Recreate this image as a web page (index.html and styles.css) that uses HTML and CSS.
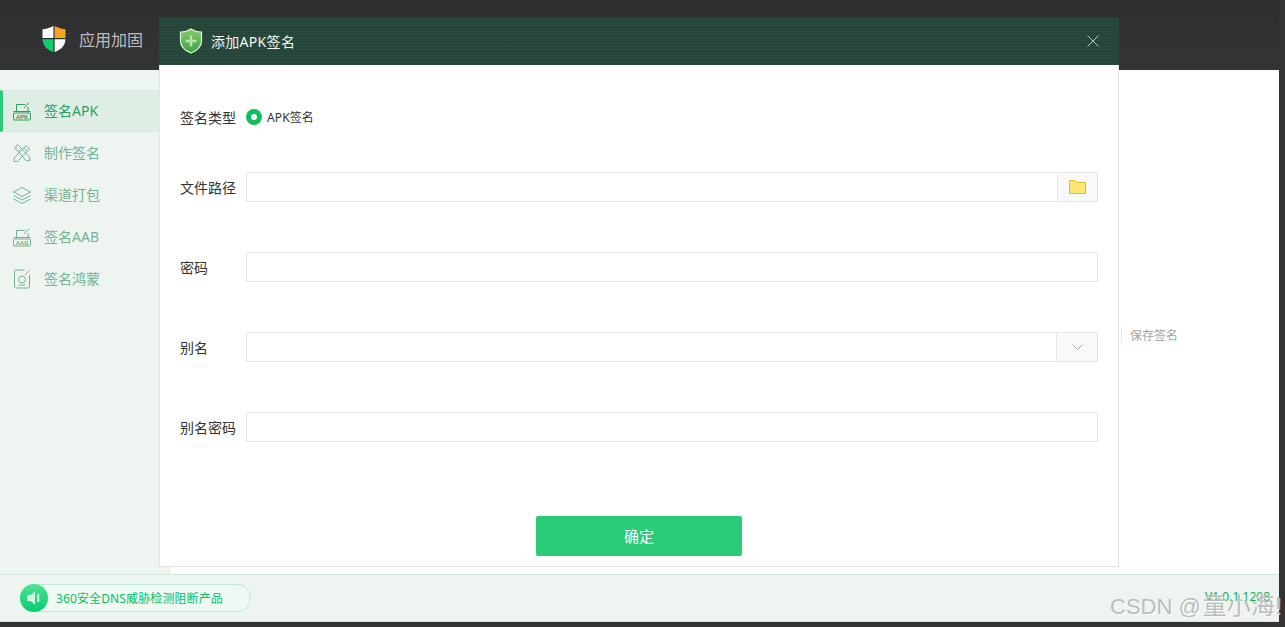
FILE: index.html
```html
<!DOCTYPE html>
<html lang="zh-CN">
<head>
<meta charset="utf-8">
<title>应用加固</title>
<link rel="stylesheet" href="styles.css">
</head>
<body>
<div class="app">
  <header class="topbar">
    <svg class="logo" width="24" height="28" viewBox="0 0 24 28">
      <path d="M11.400 1 C8 3 4 4 .5 4.200 V13 H11.400Z" fill="#fff"/>
      <path d="M12.600 1 C16 3 20 4 23.500 4.200 V13 H12.600Z" fill="#f9a51f"/>
      <path d="M.5 14.200 H11.400 V27 C6 25 .9 21.500 .5 14.200Z" fill="#0fcf6d"/>
      <path d="M23.500 14.200 H12.600 V27 C18 25 23.100 21.500 23.500 14.200Z" fill="#fff"/>
    </svg>
    <span class="app-title">应用加固</span>
  </header>
  <div class="middle">
    <nav class="sidebar">
      <a class="nav-item active">
        <svg class="nav-icon" width="18" height="20" viewBox="0 0 18 20" fill="none" stroke="currentColor"><path d="M3.500 10V3.500H12M16 1.500 11 7M15 6V10"/><rect x=".5" y="12" width="17" height="7" rx="1"/><path d="M.5 10.500H17.500"/><text x="9" y="18" class="icon-label">APK</text></svg>
        <span>签名APK</span>
      </a>
      <a class="nav-item">
        <svg class="nav-icon" width="18" height="20" viewBox="0 0 18 20" fill="none" stroke="currentColor"><path d="M1 15 13 2.500l3.500 3.500L4.500 18.500H1Z"/><path d="M1.500 4.500 4.500 1.500 16.500 14 17 18 13 17.500Z"/><path d="M11 5l3 3M4 4l-1.500 1.500M7 7 5.500 8.500"/></svg>
        <span>制作签名</span>
      </a>
      <a class="nav-item">
        <svg class="nav-icon" width="18" height="20" viewBox="0 0 18 20" fill="none" stroke="currentColor"><path d="M9 2.500 17.500 7 9 11.500 .5 7Z"/><path d="M.5 10.500 9 15 17.500 10.500"/><path d="M.5 14 9 18.500 17.500 14"/></svg>
        <span>渠道打包</span>
      </a>
      <a class="nav-item">
        <svg class="nav-icon" width="18" height="20" viewBox="0 0 18 20" fill="none" stroke="currentColor"><path d="M3.500 10V3.500H12M16 1.500 11 7M15 6V10"/><rect x=".5" y="12" width="17" height="7" rx="1"/><path d="M.5 10.500H17.500"/><text x="9" y="18" class="icon-label">AAB</text></svg>
        <span>签名AAB</span>
      </a>
      <a class="nav-item">
        <svg class="nav-icon" width="18" height="20" viewBox="0 0 18 20" fill="none" stroke="currentColor"><path d="M11.500 1H3Q1.500 1 1.500 2.500V17.500Q1.500 19 3 19H15Q16.500 19 16.500 17.500V6"/><path d="M16.500 1.500 12 6"/><circle cx="9" cy="10.500" r="3.500"/><path d="M5.500 16H12.500"/></svg>
        <span>签名鸿蒙</span>
      </a>
    </nav>
    <main class="content">
      <div class="save-row">
        <span class="ghost-btn"></span>
        <span class="save-text">保存签名</span>
      </div>
    </main>
  </div>
  <footer class="statusbar">
    <div class="notice">
      <span class="notice-icon">
        <svg width="16" height="16" viewBox="0 0 16 16"><path d="M1 5H4.500L9 1.500V14.500L4.500 11H1Z" fill="#d5f5e3"/><rect x="11" y="4" width="2.200" height="8" fill="#d5f5e3"/></svg>
      </span>
      <span class="notice-text">360安全DNS威胁检测阻断产品</span>
    </div>
    <span class="version">V1.0.1.1208</span>
  </footer>
</div>

<section class="dialog">
  <header class="dialog-head">
    <svg width="24" height="26" viewBox="0 0 24 26">
      <defs><linearGradient id="sg" x1="0" y1="0" x2="0" y2="1"><stop offset="0" stop-color="#86cc6c"/><stop offset="1" stop-color="#3fa14a"/></linearGradient></defs>
      <path d="M12 1C9 3 5 4 1.500 4.200V13C1.500 19 7 23 12 25C17 23 22.500 19 22.500 13V4.200C19 4 15 3 12 1Z" fill="url(#sg)" stroke="#e3f1dd" stroke-width="1.200"/>
      <path d="M10.800 7.500H13.200V11.800H17.500V14.200H13.200V18.500H10.800V14.200H6.500V11.800H10.800Z" fill="#b9e6a6"/>
    </svg>
    <h2 class="dialog-title">添加APK签名</h2>
    <svg class="close" width="12" height="12" viewBox="0 0 12 12" fill="none" stroke="#b9c2bd"><path d="M.5 .5 11.500 11.500M11.500 .5 .5 11.500"/></svg>
  </header>
  <form class="dialog-body">
    <div class="radio-row">
      <label class="field-label">签名类型</label>
      <span class="radio"></span>
      <span class="radio-text">APK签名</span>
    </div>
    <div class="field-row">
      <label class="field-label">文件路径</label>
      <div class="control">
        <span class="control-fill"></span>
        <span class="addon addon-folder">
          <svg width="17" height="14" viewBox="0 0 17 14"><path d="M.5 13.500V.5H6L7.500 2.500H16.500V13.500Z" fill="#ffe574" stroke="#e5b92e"/></svg>
        </span>
      </div>
    </div>
    <div class="field-row">
      <label class="field-label">密码</label>
      <div class="control"><span class="control-fill"></span></div>
    </div>
    <div class="field-row">
      <label class="field-label">别名</label>
      <div class="control">
        <span class="control-fill"></span>
        <span class="addon addon-select">
          <svg width="11" height="6" viewBox="0 0 11 6" fill="none" stroke="#a9a9a9"><path d="M.5 .5 5.500 5.500 10.500 .5"/></svg>
        </span>
      </div>
    </div>
    <div class="field-row">
      <label class="field-label">别名密码</label>
      <div class="control"><span class="control-fill"></span></div>
    </div>
    <div class="actions"><button type="button" class="confirm">确定</button></div>
  </form>
</section>
<div class="watermark">CSDN @<span class="watermark-name">童小海!</span></div>
</body>
</html>
```
FILE: styles.css
```css
* { box-sizing: border-box; }
html, body { margin: 0; height: 100%; overflow: hidden; }
body {
  background: #333335;
  font-family: "Noto Sans", "Noto Sans CJK SC", sans-serif;
  font-size: 13px;
  color: #333;
}
.app {
  width: 1279px;
  height: 622px;
  display: flex;
  flex-direction: column;
  background: #fff;
}
.topbar {
  height: 70px;
  display: flex;
  align-items: center;
  padding: 8px 0 0 42px;
  background:
    repeating-linear-gradient(0deg, rgba(255,255,255,.012) 0 1px, rgba(0,0,0,.03) 1px 3px),
    linear-gradient(#2e2e2f, #333234 60%);
}
.logo { margin-top: -1px; }
.app-title { margin: 0 0 0 13px; color: #bdbdbd; font-size: 16px; }
.middle { flex: 1; display: flex; min-height: 0; }
.sidebar {
  width: 170px;
  padding-top: 20px;
  background: #eef5f1;
  border-right: 1px solid #dde8e2;
}
.nav-item {
  height: 42px;
  display: flex;
  align-items: center;
  gap: 13px;
  padding-left: 13px;
  color: #74b392;
  font-size: 14px;
}
.nav-item span { margin-top: -2px; }
.nav-item.active {
  padding-left: 10px;
  color: #2f9d66;
  background: #deeee5;
  border-left: 3px solid #2ccb7b;
  border-top: 1px solid #d9e9e0;
  border-bottom: 1px solid #d9e9e0;
}
.icon-label { font: 700 6px "Liberation Sans", sans-serif; fill: currentColor; stroke: none; text-anchor: middle; }
.content { flex: 1; padding: 257px 0 0 950px; }
.save-row { display: flex; align-items: center; gap: 8px; height: 16px; }
.ghost-btn { width: 2px; height: 16px; border: 1px solid #e6e6e6; border-left: 0; border-radius: 0 2px 2px 0; }
.save-text { color: #a3a3a3; font-size: 12px; }
.statusbar {
  height: 48px;
  display: flex;
  align-items: flex-start;
  justify-content: space-between;
  padding: 9px 9px 0 20px;
  background: #eef5f1;
  border-top: 1px solid #cfe8da;
  border-bottom: 1px solid #dbe6e0;
}
.notice {
  width: 231px;
  height: 28px;
  display: flex;
  align-items: center;
  gap: 8px;
  background: #eff9f4;
  border: 1px solid #bfe8d2;
  border-radius: 14px;
}
.notice-icon {
  width: 28px;
  height: 28px;
  margin: -1px 0 -1px -1px;
  flex: none;
  display: flex;
  align-items: center;
  justify-content: center;
  border-radius: 50%;
  background: linear-gradient(#4fe393, #04cd70);
}
.notice-text { color: #0dbd63; font-size: 12px; letter-spacing: .12px; white-space: nowrap; }
.version { margin-top: 4px; color: #0fae4a; font-size: 12px; }

.dialog {
  position: absolute;
  left: 159px;
  top: 17px;
  width: 960px;
  height: 550px;
  display: flex;
  flex-direction: column;
  background: #fff;
  border: 1px solid #e3e3e3;
  border-top: 0;
}
.dialog-head {
  height: 48px;
  margin: 0 -1px;
  flex: none;
  display: flex;
  align-items: center;
  padding: 0 20px;
  background:
    repeating-linear-gradient(0deg, rgba(255,255,255,.015) 0 1px, rgba(0,0,0,.04) 1px 3px),
    #27483a;
  color: #fff;
}
.dialog-title { margin: 0 0 0 8px; flex: 1; font-size: 14px; font-weight: 400; letter-spacing: .3px; color: #f2f6f4; }
.close { margin-right: 0; }
.dialog-body { flex: 1; padding: 0 20px 0 20px; display: flex; flex-direction: column; }
.radio-row { height: 30px; margin-top: 37px; display: flex; align-items: center; }
.field-label { width: 66px; flex: none; font-size: 14px; color: #333; }
.radio {
  width: 16px;
  height: 16px;
  flex: none;
  border: 5px solid #0dc05c;
  border-radius: 50%;
  background: #fff;
}
.radio-text { margin-left: 5px; font-size: 12px; letter-spacing: .1px; color: #333; }
.field-row { height: 30px; margin-top: 50px; display: flex; align-items: center; }
.radio-row + .field-row { margin-top: 40px; }
.control {
  flex: 1;
  height: 30px;
  display: flex;
  border: 1px solid #e6e6e6;
}
.control-fill { flex: 1; }
.addon {
  flex: none;
  display: flex;
  align-items: center;
  justify-content: center;
  background: #f9f9f9;
  border-left: 1px solid #e6e6e6;
}
.addon-folder { width: 40px; }
.addon-select { width: 41px; }
.actions { display: flex; justify-content: center; margin-top: 74px; }
.confirm {
  width: 206px;
  height: 40px;
  padding: 0 0 2px;
  border: 0;
  border-radius: 2px;
  background: #2bcb7a;
  color: #fff;
  font: inherit;
  font-size: 15px;
}
.watermark {
  position: absolute;
  left: 1110px;
  top: 591px;
  color: #bdbdbd;
  font-family: "Liberation Sans", "Noto Sans CJK SC", sans-serif;
  font-size: 22px;
  line-height: 30px;
  white-space: nowrap;
  text-shadow: 1px 1px 0 rgba(255,255,255,.6);
}
.watermark-name { margin-left: 2px; font-size: 24px; }
```
